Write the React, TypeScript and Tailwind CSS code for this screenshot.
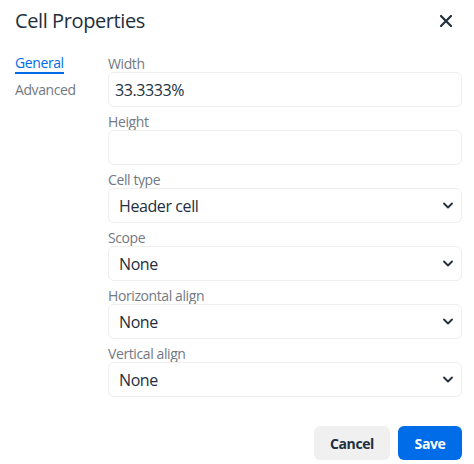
const fields: { label: string; value: string; select?: boolean }[] = [
  { label: "Width", value: "33.3333%" },
  { label: "Height", value: "" },
  { label: "Cell type", value: "Header cell", select: true },
  { label: "Scope", value: "None", select: true },
  { label: "Horizontal align", value: "None", select: true },
  { label: "Vertical align", value: "None", select: true },
];

function Chevron() {
  return (
    <svg width="10" height="7" viewBox="0 0 10 7" fill="none">
      <path
        d="M1 1.5l4 4 4-4"
        stroke="#222f3e"
        strokeWidth="1.8"
        strokeLinecap="round"
        strokeLinejoin="round"
      />
    </svg>
  );
}

function Field({
  label,
  value,
  select,
}: {
  label: string;
  value: string;
  select?: boolean;
}) {
  return (
    <div className="flex flex-col">
      <label className="flex h-[18px] items-center text-[14px] text-[#737982]">
        {label}
      </label>
      <div
        className={`flex h-[35px] items-center justify-between rounded-[6px] border border-[#eeeeee] bg-white pr-[8px] text-[16px] text-[#222f3e] ${
          select ? "pl-[10px]" : "pl-[6px]"
        }`}
      >
        <span>{value}</span>
        {select && <Chevron />}
      </div>
    </div>
  );
}

export default function App() {
  return (
    <div
      className="h-[464px] w-[474px] bg-white tracking-[-0.025em] text-[#222f3e]"
      style={{ fontFamily: '"Open Sans", "Noto Sans", sans-serif' }}
    >
      {/* Header */}
      <div className="flex h-[40px] items-center justify-between pt-[2px] pr-[22px] pl-[15px]">
        <h1 className="text-[20px] leading-none">Cell Properties</h1>
        <svg width="12" height="12" viewBox="0 0 12 12" fill="none">
          <path
            d="M1 1l10 10M11 1L1 11"
            stroke="#222f3e"
            strokeWidth="2.2"
            strokeLinecap="round"
          />
        </svg>
      </div>

      {/* Body */}
      <div className="flex pt-[14px] pr-[12px] pl-[15px]">
        {/* Tabs */}
        <div className="flex w-[93px] shrink-0 flex-col items-start gap-[7px] text-[14px]">
          <div className="flex h-[20px] items-start border-b-2 border-[#006ce7] leading-[18px] text-[#006ce7]">
            General
          </div>
          <div className="h-[18px] leading-[18px] text-[#737982]">Advanced</div>
        </div>

        {/* Form */}
        <div className="flex flex-1 flex-col gap-[5px]">
          {fields.map((f) => (
            <Field key={f.label} {...f} />
          ))}
        </div>
      </div>

      {/* Footer */}
      <div className="mt-[29px] flex justify-end gap-[8px] pr-[12px]">
        <button className="h-[34px] w-[76px] rounded-[6px] bg-[#f0f0f0] text-[14px] font-bold text-[#222f3e]">
          Cancel
        </button>
        <button className="h-[34px] w-[64px] rounded-[6px] bg-[#006ce7] text-[14px] font-bold text-white">
          Save
        </button>
      </div>
    </div>
  );
}
